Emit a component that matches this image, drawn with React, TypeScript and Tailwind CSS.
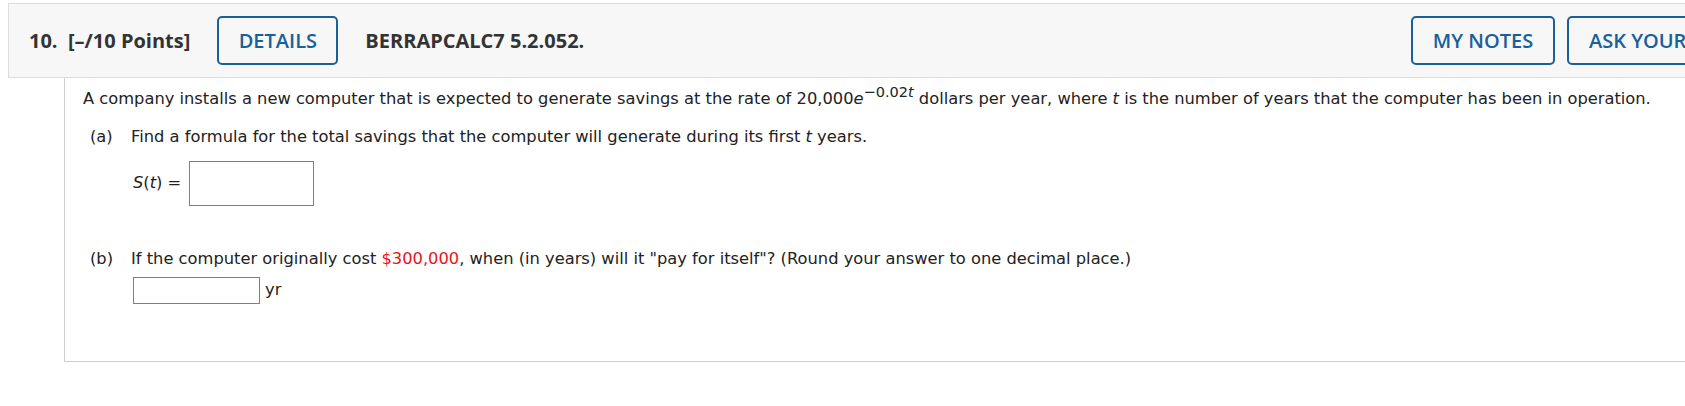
import React from "react";

const btn =
  "h-[49px] border-2 border-[#1b5f99] rounded-[5px] flex items-center justify-center text-[#16609c] text-[20px] font-semibold bg-[#f7f7f7] shrink-0 whitespace-nowrap";

export default function App() {
  return (
    <div className="w-[1685px] h-[406px] bg-white overflow-hidden">
      <div className="ml-[8px] mt-[3px] w-[1770px] h-[75px] border border-[#dcdcdc] bg-[#f7f7f7] flex items-center pr-[20px] [font-family:'Open_Sans',sans-serif]">
        <div className="ml-[20px] text-[20px] font-bold text-[#333] whitespace-pre">10.  [–/10 Points]</div>
        <div className={btn + " ml-[27px] w-[121px]"}>DETAILS</div>
        <div className="ml-[27px] text-[20px] font-bold text-[#333]">BERRAPCALC7 5.2.052.</div>
        <div className="flex-1" />
        <div className={btn + " w-[144px]"}>MY NOTES</div>
        <div className={btn + " ml-[12px] w-[190px] justify-start pl-[20px]"}>ASK YOUR TEACHER</div>
      </div>
      <div className="ml-[64px] w-[1700px] h-[284px] border-l border-b border-[#cfcfcf] pl-[18px] pt-[9px] text-[16.3px] text-[#222] [font-family:'DejaVu_Sans',Verdana,sans-serif]">
        <p className="h-[24px] leading-[24px] whitespace-nowrap">
          A company installs a new computer that is expected to generate savings at the rate of 20,000<i>e</i>
          <sup className="text-[14.5px] relative top-[-7px]">−0.02<i>t</i></sup> dollars per year, where <i>t</i> is the number of years that the computer has been in operation.
        </p>
        <div className="mt-[15px] flex leading-[22px]">
          <span className="w-[48px] pl-[7px]">(a)</span>
          <span>Find a formula for the total savings that the computer will generate during its first <i>t</i> years.</span>
        </div>
        <div className="mt-[13px] ml-[50px] flex items-center">
          <span><i>S</i>(<i>t</i>) =</span>
          <div className="ml-[8px] w-[125px] h-[45px] border border-[#808080] bg-white" />
        </div>
        <div className="mt-[42px] flex leading-[22px]">
          <span className="w-[48px] pl-[7px]">(b)</span>
          <span>
            If the computer originally cost <span className="text-[#e8141b]">$300,000</span>, when (in years) will it "pay for itself"? (Round your answer to one decimal place.)
          </span>
        </div>
        <div className="mt-[7px] ml-[50px] flex items-center">
          <div className="w-[127px] h-[27px] border border-[#808080] bg-white" />
          <span className="ml-[5px]">yr</span>
        </div>
      </div>
    </div>
  );
}
